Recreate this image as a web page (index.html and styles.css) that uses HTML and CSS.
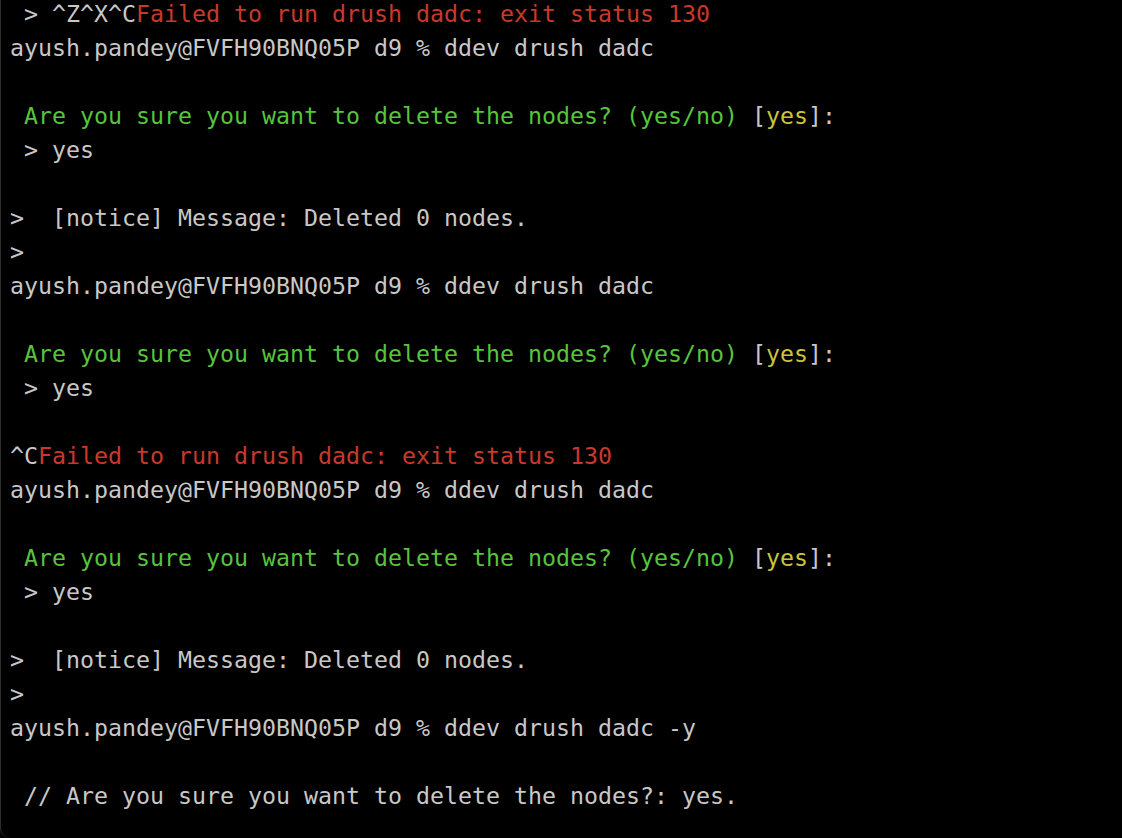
FILE: index.html
```html
<!DOCTYPE html>
<html>
<head>
<meta charset="utf-8">
<link rel="stylesheet" href="styles.css">
</head>
<body>
<div class="window">
  <div class="term">
    <div class="line"> &gt; ^Z^X^C<span class="red">Failed to run drush dadc: exit status 130</span></div>
    <div class="line">ayush.pandey@FVFH90BNQ05P d9 % ddev drush dadc</div>
    <div class="line"></div>
    <div class="line"><span class="green"> Are you sure you want to delete the nodes? (yes/no) </span>[<span class="yellow">yes</span>]:</div>
    <div class="line"> &gt; yes</div>
    <div class="line"></div>
    <div class="line">&gt;  [notice] Message: Deleted 0 nodes.</div>
    <div class="line">&gt;</div>
    <div class="line">ayush.pandey@FVFH90BNQ05P d9 % ddev drush dadc</div>
    <div class="line"></div>
    <div class="line"><span class="green"> Are you sure you want to delete the nodes? (yes/no) </span>[<span class="yellow">yes</span>]:</div>
    <div class="line"> &gt; yes</div>
    <div class="line"></div>
    <div class="line">^C<span class="red">Failed to run drush dadc: exit status 130</span></div>
    <div class="line">ayush.pandey@FVFH90BNQ05P d9 % ddev drush dadc</div>
    <div class="line"></div>
    <div class="line"><span class="green"> Are you sure you want to delete the nodes? (yes/no) </span>[<span class="yellow">yes</span>]:</div>
    <div class="line"> &gt; yes</div>
    <div class="line"></div>
    <div class="line">&gt;  [notice] Message: Deleted 0 nodes.</div>
    <div class="line">&gt;</div>
    <div class="line">ayush.pandey@FVFH90BNQ05P d9 % ddev drush dadc -y</div>
    <div class="line"></div>
    <div class="line"> // Are you sure you want to delete the nodes?: yes.</div>
  </div>
</div>
</body>
</html>
```
FILE: styles.css
```css
html, body {
  margin: 0;
  padding: 0;
  background: #000;
  height: 100%;
  overflow: hidden;
}
.window {
  height: 838px;
  box-sizing: border-box;
  border-left: 1px solid #2e2e2e;
  border-bottom-left-radius: 10px;
  background: #000;
  overflow: hidden;
}
.term {
  margin: -3px 0 0 0;
  padding: 0 0 0 9px;
  font-family: "DejaVu Sans Mono", monospace;
  font-size: 23.25px;
  line-height: 34px;
  color: #c8c8c8;
}
.line {
  height: 34px;
  white-space: pre;
}
.red { color: #c9392a; }
.green { color: #57c43c; }
.yellow { color: #c9c53c; }
```
